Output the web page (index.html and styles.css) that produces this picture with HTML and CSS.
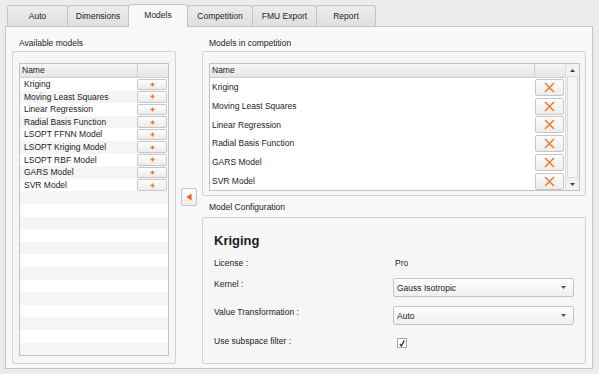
FILE: index.html
```html
<!DOCTYPE html>
<html lang="en">
<head>
  <meta charset="UTF-8">
  <title>Models</title>
  <link rel="stylesheet" href="styles.css">
</head>
<body>
  <div class="tabs">
    <div class="tab w-auto">Auto</div>
    <div class="tab w-dim">Dimensions</div>
    <div class="tab active w-models">Models</div>
    <div class="tab w-comp">Competition</div>
    <div class="tab w-fmu">FMU Export</div>
    <div class="tab w-report">Report</div>
  </div>

  <div class="pane">
    <!-- left: available models -->
    <div class="col-left">
      <div class="caption">Available models</div>
      <div class="group group-avail">
        <div class="list avail">
          <div class="head">
            <div class="head-name">Name</div>
            <div class="head-act"></div>
          </div>
          <div class="avail-body">
            <div class="arow"><span class="name">Kriging</span><span class="act"><button class="plus"><svg width="5" height="5" viewBox="0 0 5 5"><path d="M2.5 0.5v4M0.5 2.5h4" stroke="#f7761c" stroke-width="1.3"/></svg></button></span></div>
            <div class="arow"><span class="name">Moving Least Squares</span><span class="act"><button class="plus"><svg width="5" height="5" viewBox="0 0 5 5"><path d="M2.5 0.5v4M0.5 2.5h4" stroke="#f7761c" stroke-width="1.3"/></svg></button></span></div>
            <div class="arow"><span class="name">Linear Regression</span><span class="act"><button class="plus"><svg width="5" height="5" viewBox="0 0 5 5"><path d="M2.5 0.5v4M0.5 2.5h4" stroke="#f7761c" stroke-width="1.3"/></svg></button></span></div>
            <div class="arow"><span class="name">Radial Basis Function</span><span class="act"><button class="plus"><svg width="5" height="5" viewBox="0 0 5 5"><path d="M2.5 0.5v4M0.5 2.5h4" stroke="#f7761c" stroke-width="1.3"/></svg></button></span></div>
            <div class="arow"><span class="name">LSOPT FFNN Model</span><span class="act"><button class="plus"><svg width="5" height="5" viewBox="0 0 5 5"><path d="M2.5 0.5v4M0.5 2.5h4" stroke="#f7761c" stroke-width="1.3"/></svg></button></span></div>
            <div class="arow"><span class="name">LSOPT Kriging Model</span><span class="act"><button class="plus"><svg width="5" height="5" viewBox="0 0 5 5"><path d="M2.5 0.5v4M0.5 2.5h4" stroke="#f7761c" stroke-width="1.3"/></svg></button></span></div>
            <div class="arow"><span class="name">LSOPT RBF Model</span><span class="act"><button class="plus"><svg width="5" height="5" viewBox="0 0 5 5"><path d="M2.5 0.5v4M0.5 2.5h4" stroke="#f7761c" stroke-width="1.3"/></svg></button></span></div>
            <div class="arow"><span class="name">GARS Model</span><span class="act"><button class="plus"><svg width="5" height="5" viewBox="0 0 5 5"><path d="M2.5 0.5v4M0.5 2.5h4" stroke="#f7761c" stroke-width="1.3"/></svg></button></span></div>
            <div class="arow"><span class="name">SVR Model</span><span class="act"><button class="plus"><svg width="5" height="5" viewBox="0 0 5 5"><path d="M2.5 0.5v4M0.5 2.5h4" stroke="#f7761c" stroke-width="1.3"/></svg></button></span></div>
          </div>
        </div>
      </div>
    </div>

    <!-- middle: move button -->
    <div class="col-mid">
      <button class="move"><svg width="6" height="8" viewBox="0 0 6 8"><path d="M5.5 0.5v7L0.5 4z" fill="#f95f0a"/></svg></button>
    </div>

    <!-- right: competition + configuration -->
    <div class="col-right">
      <div class="caption">Models in competition</div>
      <div class="group group-comp">
        <div class="list comp">
          <div class="comp-main">
            <div class="head">
              <div class="head-name">Name</div>
              <div class="head-act"></div>
            </div>
            <div class="crow"><span class="name">Kriging</span><span class="act"><button class="del"><svg width="11" height="11" viewBox="0 0 11 11"><path d="M1 1l9 9M10 1l-9 9" stroke="#f57a1f" stroke-width="1.5"/></svg></button></span></div>
            <div class="crow"><span class="name">Moving Least Squares</span><span class="act"><button class="del"><svg width="11" height="11" viewBox="0 0 11 11"><path d="M1 1l9 9M10 1l-9 9" stroke="#f57a1f" stroke-width="1.5"/></svg></button></span></div>
            <div class="crow"><span class="name">Linear Regression</span><span class="act"><button class="del"><svg width="11" height="11" viewBox="0 0 11 11"><path d="M1 1l9 9M10 1l-9 9" stroke="#f57a1f" stroke-width="1.5"/></svg></button></span></div>
            <div class="crow"><span class="name">Radial Basis Function</span><span class="act"><button class="del"><svg width="11" height="11" viewBox="0 0 11 11"><path d="M1 1l9 9M10 1l-9 9" stroke="#f57a1f" stroke-width="1.5"/></svg></button></span></div>
            <div class="crow"><span class="name">GARS Model</span><span class="act"><button class="del"><svg width="11" height="11" viewBox="0 0 11 11"><path d="M1 1l9 9M10 1l-9 9" stroke="#f57a1f" stroke-width="1.5"/></svg></button></span></div>
            <div class="crow"><span class="name">SVR Model</span><span class="act"><button class="del"><svg width="11" height="11" viewBox="0 0 11 11"><path d="M1 1l9 9M10 1l-9 9" stroke="#f57a1f" stroke-width="1.5"/></svg></button></span></div>
          </div>
          <div class="vscroll">
            <div class="sbtn"><svg width="5" height="3" viewBox="0 0 5 3"><path d="M0 3h5L2.5 0z" fill="#444"/></svg></div>
            <div class="track"></div>
            <div class="sbtn"><svg width="5" height="3" viewBox="0 0 5 3"><path d="M0 0h5L2.5 3z" fill="#444"/></svg></div>
          </div>
        </div>
      </div>

      <div class="caption caption-config">Model Configuration</div>
      <div class="group group-config">
        <div class="config-title">Kriging</div>
        <div class="config-grid">
          <div class="lbl">License :</div>
          <div class="val">Pro</div>
          <div class="lbl">Kernel :</div>
          <div class="combo"><span>Gauss Isotropic</span><svg width="5" height="3" viewBox="0 0 5 3"><path d="M0 0h5L2.5 3z" fill="#555"/></svg></div>
          <div class="lbl">Value Transformation :</div>
          <div class="combo"><span>Auto</span><svg width="5" height="3" viewBox="0 0 5 3"><path d="M0 0h5L2.5 3z" fill="#555"/></svg></div>
          <div class="lbl lbl-last">Use subspace filter :</div>
          <div class="val val-last"><span class="check"><svg width="6" height="7" viewBox="0 0 6 7"><path d="M0.8 3.8l1.6 2.2L5.2 0.6" stroke="#222" stroke-width="1.2" fill="none"/></svg></span></div>
        </div>
      </div>
    </div>
  </div>
</body>
</html>
```

FILE: styles.css
```css
body {
  margin: 0;
  background: #ececec;
  font-family: "Liberation Sans", Arial, sans-serif;
  font-size: 8.5px;
  color: #1c1c1c;
  width: 599px;
  height: 374px;
  overflow: hidden;
}
button {
  font: inherit;
  padding: 0;
  margin: 0;
  cursor: default;
}

/* tabs */
.tabs {
  display: flex;
  align-items: flex-start;
  padding: 5px 0 0 7px;
  height: 27px;
  box-sizing: border-box;
  margin-bottom: -1px;
}
.tab {
  box-sizing: border-box;
  height: 21px;
  line-height: 21px;
  text-align: center;
  margin-right: -1px;
  border: 1px solid #c4c4c4;
  border-bottom: none;
  border-radius: 3px 3px 0 0;
  background: linear-gradient(#ececec, #e0e0e0);
}
.tab.active {
  position: relative;
  z-index: 1;
  height: 23px;
  margin-top: -1px;
  line-height: 21px;
  background: #f8f8f8;
}
.w-auto { width: 61px; }
.w-dim { width: 62px; }
.w-models { width: 60px; }
.w-comp { width: 66px; }
.w-fmu { width: 65px; }
.w-report { width: 60px; }

/* main pane */
.pane {
  box-sizing: border-box;
  margin-left: 5px;
  width: 588px;
  height: 343px;
  border: 1px solid #c6c6c6;
  background: #f8f8f8;
  padding: 9px 6px 4px 6px;
  display: grid;
  grid-template-columns: 164px 16px 384px;
  column-gap: 5px;
}
.caption {
  height: 15px;
  line-height: 15px;
  padding-left: 7px;
}
.caption-config {
  height: 21px;
  line-height: 23px;
}
.group {
  box-sizing: border-box;
  border: 1px solid #d2d2d2;
  border-radius: 2px;
  background: #f6f6f6;
}

/* available models */
.group-avail {
  height: 313px;
  padding: 11px 6px 7px 6px;
}
.list {
  box-sizing: border-box;
  border: 1px solid #c2c2c2;
  background: #fff;
}
.avail {
  height: 293px;
  display: flex;
  flex-direction: column;
}
.head {
  display: flex;
  height: 13px;
  line-height: 13px;
  border-bottom: 1px solid #cfcfcf;
  background: linear-gradient(#f6f6f6, #e6e6e6);
}
.head-name {
  flex: 1;
  padding-left: 2px;
}
.head-act {
  width: 30px;
  border-left: 1px solid #cfcfcf;
}
.avail-body {
  flex: 1;
  background: repeating-linear-gradient(#fff 0 12.6px, #f5f5f5 12.6px 25.2px);
}
.arow {
  display: flex;
  height: 12.6px;
  line-height: 12.6px;
}
.name {
  flex: 1;
  padding-left: 4px;
}
.arow .act {
  width: 31px;
  display: flex;
  align-items: center;
}
.plus {
  width: 30px;
  height: 11.6px;
  border: 1px solid #c6c6c6;
  border-radius: 2px;
  background: linear-gradient(#fdfdfd, #ececec);
  display: flex;
  align-items: center;
  justify-content: center;
}
.plus svg { display: block; }

/* middle */
.move {
  margin-top: 152px;
  width: 16px;
  height: 18px;
  border: 1px solid #c6c6c6;
  border-radius: 2px;
  background: linear-gradient(#fdfdfd, #ececec);
  display: flex;
  align-items: center;
  justify-content: center;
}
.move svg { display: block; }

/* competition */
.group-comp {
  height: 145px;
  padding: 11px 5px 4px 6px;
}
.comp {
  height: 128px;
  display: flex;
}
.comp-main {
  flex: 1;
}
.crow {
  display: flex;
  height: 18.8px;
  line-height: 18.8px;
}
.crow .name { padding-left: 2px; }
.crow .act {
  width: 31px;
  display: flex;
  align-items: center;
}
.del {
  width: 29px;
  height: 17px;
  margin-left: 1px;
  border: 1px solid #c6c6c6;
  border-radius: 2px;
  background: linear-gradient(#fdfdfd, #ececec);
  display: flex;
  align-items: center;
  justify-content: center;
}
.del svg { display: block; }
.vscroll {
  width: 13px;
  display: flex;
  flex-direction: column;
  background: #f2f2f2;
  border-left: 1px solid #dcdcdc;
}
.sbtn {
  height: 12px;
  display: flex;
  align-items: center;
  justify-content: center;
}
.sbtn svg { display: block; }
.track {
  flex: 1;
  margin: 0 1px;
  border: 1px solid #d8d8d8;
  background: #f6f6f6;
}

/* configuration */
.group-config {
  height: 147px;
  padding: 15px 12px 0 11px;
}
.config-title {
  font-size: 13px;
  font-weight: bold;
  line-height: 16px;
  margin-bottom: 8px;
}
.config-grid {
  display: grid;
  grid-template-columns: 179px 181px;
  row-gap: 9px;
  align-items: start;
}
.lbl, .val {
  line-height: 12px;
}
.val { padding-left: 2px; }
.lbl-last, .val-last { margin-top: 1px; }
.combo {
  box-sizing: border-box;
  height: 19px;
  border: 1px solid #c4c4c4;
  border-radius: 2px;
  background: linear-gradient(#fefefe, #efefef);
  display: flex;
  align-items: center;
  justify-content: space-between;
  padding: 0 7px 0 3px;
}
.combo svg { display: block; }
.check {
  margin: 3px 0 0 2px;
  box-sizing: border-box;
  width: 10px;
  height: 10px;
  border: 1px solid #a8a8a8;
  background: #fff;
  display: flex;
  align-items: center;
  justify-content: center;
}
.check svg { display: block; }
```
